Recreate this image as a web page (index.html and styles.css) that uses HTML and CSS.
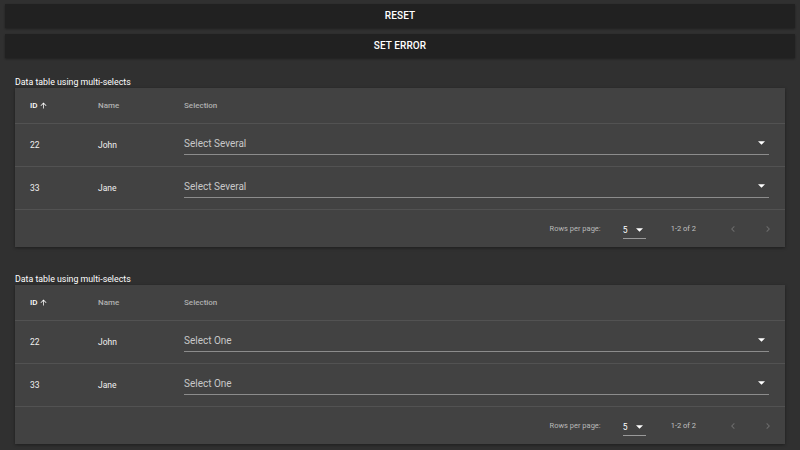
FILE: index.html
```html
<!DOCTYPE html>
<html>
<head>
<meta charset="utf-8">
<link rel="stylesheet" href="styles.css">
</head>
<body>
<div class="page">
  <button class="btn">RESET</button>
  <button class="btn">SET ERROR</button>

  <section class="section first">
    <div class="title">Data table using multi-selects</div>
    <div class="card">
      <div class="row head">
        <div class="cell id">ID <svg class="sort" viewBox="0 0 24 24" width="9" height="9"><path d="M4 12l1.41 1.41L11 7.83V20h2V7.83l5.58 5.59L20 12l-8-8-8 8z" fill="#fff"/></svg></div>
        <div class="cell">Name</div>
        <div class="cell">Selection</div>
      </div>
      <div class="row body">
        <div class="cell">22</div>
        <div class="cell">John</div>
        <div class="cell"><div class="select"><span>Select Several</span><svg viewBox="0 0 10 5" width="7" height="4"><path d="M0 0h10L5 5z" fill="#fff"/></svg></div></div>
      </div>
      <div class="row body">
        <div class="cell">33</div>
        <div class="cell">Jane</div>
        <div class="cell"><div class="select"><span>Select Several</span><svg viewBox="0 0 10 5" width="7" height="4"><path d="M0 0h10L5 5z" fill="#fff"/></svg></div></div>
      </div>
      <div class="footer">
        <span class="rpp">Rows per page:</span>
        <div class="mini"><span>5</span><svg viewBox="0 0 10 5" width="7" height="4"><path d="M0 0h10L5 5z" fill="#fff"/></svg></div>
        <span class="count">1-2 of 2</span>
        <svg class="chev prev" viewBox="0 0 24 24" width="12" height="12"><path d="M15.41 7.41L14 6l-6 6 6 6 1.41-1.41L10.83 12z" fill="#6b6b6b"/></svg>
        <svg class="chev next" viewBox="0 0 24 24" width="12" height="12"><path d="M10 6L8.59 7.41 13.17 12l-4.58 4.59L10 18l6-6z" fill="#6b6b6b"/></svg>
      </div>
    </div>
  </section>

  <section class="section second">
    <div class="title">Data table using multi-selects</div>
    <div class="card">
      <div class="row head">
        <div class="cell id">ID <svg class="sort" viewBox="0 0 24 24" width="9" height="9"><path d="M4 12l1.41 1.41L11 7.83V20h2V7.83l5.58 5.59L20 12l-8-8-8 8z" fill="#fff"/></svg></div>
        <div class="cell">Name</div>
        <div class="cell">Selection</div>
      </div>
      <div class="row body">
        <div class="cell">22</div>
        <div class="cell">John</div>
        <div class="cell"><div class="select"><span>Select One</span><svg viewBox="0 0 10 5" width="7" height="4"><path d="M0 0h10L5 5z" fill="#fff"/></svg></div></div>
      </div>
      <div class="row body">
        <div class="cell">33</div>
        <div class="cell">Jane</div>
        <div class="cell"><div class="select"><span>Select One</span><svg viewBox="0 0 10 5" width="7" height="4"><path d="M0 0h10L5 5z" fill="#fff"/></svg></div></div>
      </div>
      <div class="footer">
        <span class="rpp">Rows per page:</span>
        <div class="mini"><span>5</span><svg viewBox="0 0 10 5" width="7" height="4"><path d="M0 0h10L5 5z" fill="#fff"/></svg></div>
        <span class="count">1-2 of 2</span>
        <svg class="chev prev" viewBox="0 0 24 24" width="12" height="12"><path d="M15.41 7.41L14 6l-6 6 6 6 1.41-1.41L10.83 12z" fill="#6b6b6b"/></svg>
        <svg class="chev next" viewBox="0 0 24 24" width="12" height="12"><path d="M10 6L8.59 7.41 13.17 12l-4.58 4.59L10 18l6-6z" fill="#6b6b6b"/></svg>
      </div>
    </div>
  </section>
</div>
</body>
</html>
```
FILE: styles.css
```css
* { box-sizing: border-box; }
html, body {
  margin: 0;
  padding: 0;
  background: #303030;
  font-family: Roboto, "Liberation Sans", Arial, sans-serif;
  color: #fff;
  overflow: hidden;
}
.page {
  width: 800px;
  height: 450px;
  padding: 4px 5px 0 5px;
  display: flex;
  flex-direction: column;
}
.btn {
  display: block;
  width: 790px;
  height: 24px;
  margin: 0 0 6px 0;
  border: none;
  background: #212121;
  color: #fff;
  font-family: Roboto, "Liberation Sans", Arial, sans-serif;
  font-weight: 500;
  font-size: 10px;
  letter-spacing: 0.1px;
  padding: 0 0 1px 0;
  box-shadow: 0 1px 2px rgba(0,0,0,0.35);
}
.section {
  padding: 0 10px;
}
.section.first { margin-top: 11px; }
.section.second { margin-top: 25px; }
.title {
  font-size: 8.8px;
  line-height: 12px;
  height: 13px;
  padding-top: 1px;
  color: #fff;
}
.card {
  background: #424242;
  width: 770px;
  box-shadow: 0 1px 3px rgba(0,0,0,0.4);
}
.row {
  display: grid;
  grid-template-columns: 68px 86px 1fr;
  align-items: center;
  padding: 0 16px 0 15px;
  border-bottom: 1px solid #525252;
}
.row.head {
  height: 36px;
  font-size: 8px;
  font-weight: 500;
  color: #b0b0b0;
}
.cell.id {
  color: #fff;
  display: flex;
  align-items: center;
  gap: 1px;
}
.row.body {
  height: 43px;
  font-size: 8.5px;
  color: #f0f0f0;
}
.select {
  display: flex;
  align-items: center;
  justify-content: space-between;
  height: 22px;
  margin-top: -3px;
  padding-right: 4px;
  border-bottom: 1px solid #8c8c8c;
  font-size: 10px;
  color: #c8c8c8;
}
.footer {
  height: 37px;
  display: flex;
  align-items: center;
  justify-content: flex-end;
  padding-right: 11px;
  font-size: 7.5px;
  color: #c0c0c0;
}
.rpp { margin-right: 22px; color: #b8b8b8; }
.mini {
  width: 23px;
  height: 17px;
  display: flex;
  align-items: center;
  justify-content: space-between;
  padding-right: 3px;
  margin-top: 3px;
  border-bottom: 1px solid #9a9a9a;
  color: #fff;
  font-size: 8.5px;
  margin-right: 25px;
}
.count { margin-right: 31px; }
.chev { display: block; }
.chev.prev { margin-right: 23px; }
```
